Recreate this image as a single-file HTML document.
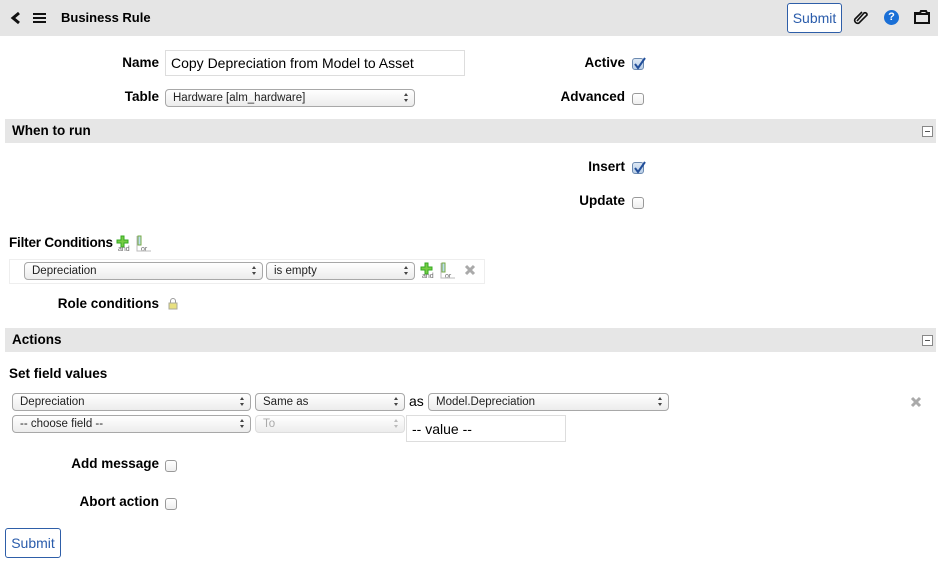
<!DOCTYPE html><html><head><style>
body{margin:0;width:938px;height:562px;position:relative;background:#fff;font-family:"Liberation Sans",Arial,sans-serif;overflow:hidden;color:#000}
.a{position:absolute}
.b{font-weight:bold;font-size:13.5px}
.r{position:absolute;font-weight:bold;font-size:13.5px;text-align:right;width:200px}
.sel{position:absolute;height:16px;border:1px solid #a8a8a8;border-radius:4px;background:linear-gradient(#fff,#ececec);font-size:11.5px;line-height:17px;padding-left:7px;box-sizing:content-box;color:#222}
.sel:after{content:"";position:absolute;right:6px;top:3px;width:0;height:0;border-left:2.5px solid transparent;border-right:2.5px solid transparent;border-bottom:3px solid #444;}
.sel:before{content:"";position:absolute;right:6px;top:9px;width:0;height:0;border-left:2.5px solid transparent;border-right:2.5px solid transparent;border-top:3px solid #444;}
.sel.dis{color:#aaa}.sel.dis:after{border-bottom-color:#bbb}.sel.dis:before{border-top-color:#bbb}
.cb{position:absolute;width:10px;height:10px;border:1px solid #999;border-radius:3px;background:linear-gradient(#fff,#eee)}
.ck{position:absolute;width:10px;height:10px;border:1px solid #6c8ab0;border-radius:3px;background:linear-gradient(#dde8f5,#b8cde6)}
.ck svg{position:absolute;left:0;top:-3px}
.sec{position:absolute;left:5px;width:931px;height:24px;background:#e6e6e6}
.sec span{position:absolute;left:7px;top:4px;font-weight:bold;font-size:13.5px}
.mn{position:absolute;right:3px;top:7px;width:9px;height:9px;border:1px solid #888;background:#fff}
.mn:after{content:"";position:absolute;left:2px;top:4px;width:5px;height:1px;background:#555}
</style></head><body>
<div class="a" style="left:0;top:0;width:938px;height:36px;background:#e5e5e5"></div>
<svg class="a" style="left:10px;top:11px" width="12" height="14"><path d="M9 2 L3 7 L9 12" stroke="#111" stroke-width="3" fill="none"/></svg>
<svg class="a" style="left:33px;top:12px" width="13" height="12"><rect y="1" width="13" height="2" fill="#111"/><rect y="5" width="13" height="2" fill="#111"/><rect y="9" width="13" height="2" fill="#111"/></svg>
<div class="a b" style="left:61px;top:10px;font-size:13px">Business Rule</div>
<div class="a" style="left:787px;top:3px;width:53px;height:28px;border:1px solid #2e5ea8;border-radius:3px;background:#fff;color:#2a5cab;font-size:14px;line-height:28px;text-align:center">Submit</div>
<svg class="a" style="left:853px;top:9px" width="16" height="16"><path d="M4 12 L11 4 A2 2 0 0 1 14 6 L6 14 A3 3 0 0 1 2 10 L9 3" stroke="#111" stroke-width="1.6" fill="none"/></svg>
<div class="a" style="left:884px;top:10px;width:15px;height:15px;border-radius:50%;background:#1a6fd6;color:#fff;font-size:11px;font-weight:bold;text-align:center;line-height:15px">?</div>
<svg class="a" style="left:913px;top:9px" width="18" height="16"><path d="M2 4 H7 L8 2 H13 L14 4 H16 V14 H2 Z" fill="none" stroke="#111" stroke-width="2"/><rect x="2" y="4" width="14" height="2" fill="#111"/></svg>

<div class="r" style="left:-41px;top:55px">Name</div>
<div class="a" style="left:165px;top:50px;border:1px solid #ddd;font-size:14px;line-height:25px;padding-left:5px;box-sizing:border-box;width:300px;height:26px">Copy Depreciation from Model to Asset</div>
<div class="r" style="left:-41px;top:89px">Table</div>
<div class="sel" style="left:165px;top:89px;width:241px">Hardware [alm_hardware]</div>
<div class="r" style="left:425px;top:55px">Active</div>
<div class="ck" style="left:632px;top:58px"><svg width="14" height="14"><path d="M2 8 L5 12 L12 2" stroke="#224f9a" stroke-width="2" fill="none"/></svg></div>
<div class="r" style="left:425px;top:89px">Advanced</div>
<div class="cb" style="left:632px;top:93px"></div>

<div class="sec" style="top:119px"><span>When to run</span><div class="mn"></div></div>
<div class="r" style="left:425px;top:159px">Insert</div>
<div class="ck" style="left:632px;top:162px"><svg width="14" height="14"><path d="M2 8 L5 12 L12 2" stroke="#224f9a" stroke-width="2" fill="none"/></svg></div>
<div class="r" style="left:425px;top:193px">Update</div>
<div class="cb" style="left:632px;top:197px"></div>

<div class="a b" style="left:9px;top:235px;letter-spacing:-0.2px">Filter Conditions</div>
<svg class="a" style="left:115px;top:235px" width="16" height="17"><path d="M6 1h3v4h4v3H9v4H6V8H2V5h4z" fill="#7c4" stroke="#3a2"/><text x="3" y="16" font-size="7" fill="#666" font-family="Liberation Sans">and</text></svg>
<svg class="a" style="left:136px;top:235px" width="16" height="17"><rect x="2" y="1" width="3" height="9" fill="#bde" stroke="#7a4"/><text x="5" y="16" font-size="7" fill="#666" font-family="Liberation Sans">or</text><path d="M1 1V16H15" stroke="#bbb" fill="none"/></svg>
<div class="a" style="left:9px;top:259px;width:474px;height:23px;border:1px solid #eee"></div>
<div class="sel" style="left:24px;top:262px;width:230px">Depreciation</div>
<div class="sel" style="left:266px;top:262px;width:140px">is empty</div>
<svg class="a" style="left:419px;top:262px" width="16" height="17"><path d="M6 1h3v4h4v3H9v4H6V8H2V5h4z" fill="#7c4" stroke="#3a2"/><text x="3" y="16" font-size="7" fill="#666" font-family="Liberation Sans">and</text></svg>
<svg class="a" style="left:440px;top:262px" width="16" height="17"><rect x="2" y="1" width="3" height="9" fill="#bde" stroke="#7a4"/><text x="5" y="16" font-size="7" fill="#666" font-family="Liberation Sans">or</text><path d="M1 1V16H15" stroke="#bbb" fill="none"/></svg>
<svg class="a" style="left:464px;top:264px" width="12" height="12"><path d="M2 2L10 10M10 2L2 10" stroke="#aaa" stroke-width="3"/></svg>
<div class="r" style="left:-41px;top:296px">Role conditions</div>
<svg class="a" style="left:168px;top:297px" width="10" height="13"><path d="M2.5 6V4a2.5 2.5 0 0 1 5 0v2" stroke="#999" fill="none"/><rect x="1" y="6" width="8" height="6" fill="#e8e080" stroke="#aa9"/></svg>

<div class="sec" style="top:328px"><span>Actions</span><div class="mn"></div></div>
<div class="a b" style="left:9px;top:366px">Set field values</div>
<div class="sel" style="left:12px;top:393px;width:230px">Depreciation</div>
<div class="sel" style="left:255px;top:393px;width:141px">Same as</div>
<div class="a" style="left:409px;top:393px;font-size:14px">as</div>
<div class="sel" style="left:428px;top:393px;width:232px">Model.Depreciation</div>
<svg class="a" style="left:910px;top:396px" width="12" height="12"><path d="M2 2L10 10M10 2L2 10" stroke="#aaa" stroke-width="3"/></svg>
<div class="sel" style="left:12px;top:415px;width:230px">-- choose field --</div>
<div class="sel dis" style="left:255px;top:415px;width:141px;border-color:#ddd">To</div>
<div class="a" style="left:406px;top:415px;width:160px;height:27px;border:1px solid #ddd;box-sizing:border-box;font-size:14px;line-height:27px;padding-left:5px">-- value --</div>
<div class="r" style="left:-41px;top:456px">Add message</div>
<div class="cb" style="left:165px;top:460px"></div>
<div class="r" style="left:-41px;top:494px">Abort action</div>
<div class="cb" style="left:165px;top:498px"></div>
<div class="a" style="left:5px;top:528px;width:54px;height:28px;border:1px solid #2e5ea8;border-radius:3px;color:#2a5cab;font-size:14px;line-height:28px;text-align:center">Submit</div>
</body></html>
